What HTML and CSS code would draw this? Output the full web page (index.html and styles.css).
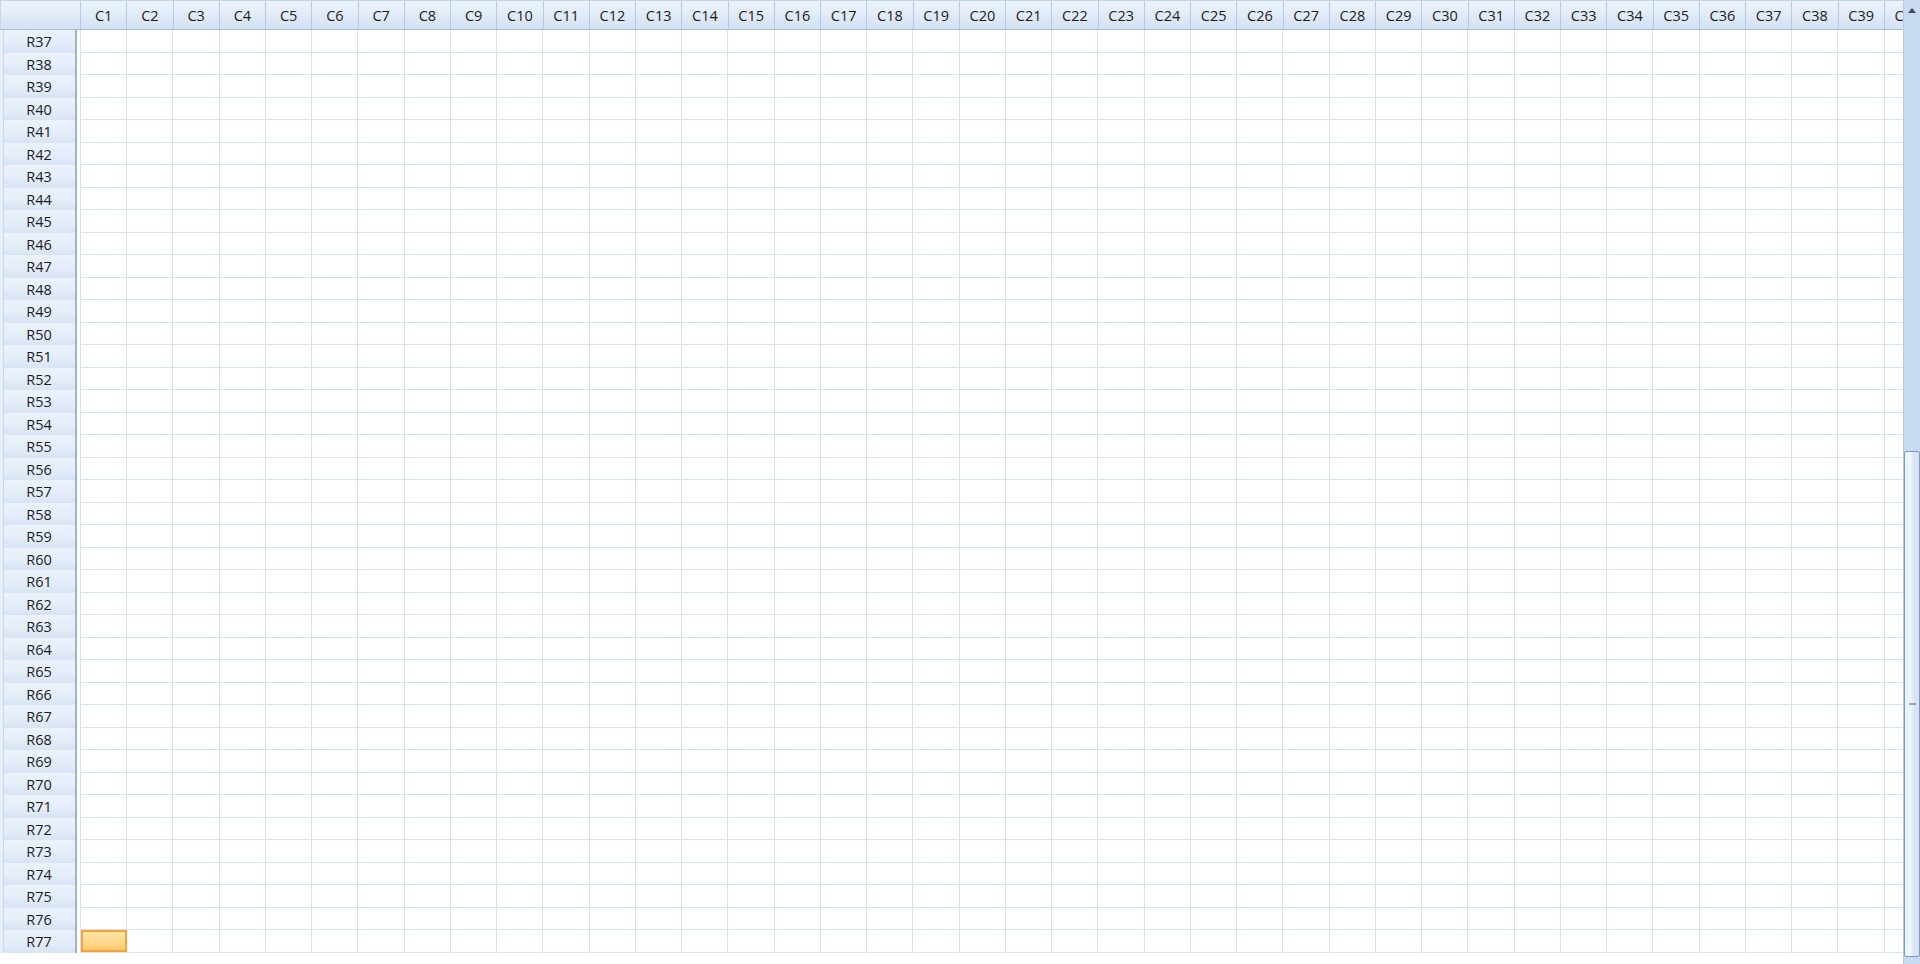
FILE: index.html
```html
<!DOCTYPE html>
<html>
<head>
<meta charset="utf-8">
<link rel="stylesheet" href="styles.css">
</head>
<body>
<div class="app">
  <div class="sheet">
    <div class="hdr">
      <div class="corner"></div>
      <div class="ch">C1</div><div class="ch">C2</div><div class="ch">C3</div><div class="ch">C4</div><div class="ch">C5</div><div class="ch">C6</div><div class="ch">C7</div><div class="ch">C8</div><div class="ch">C9</div><div class="ch">C10</div><div class="ch">C11</div><div class="ch">C12</div><div class="ch">C13</div><div class="ch">C14</div><div class="ch">C15</div><div class="ch">C16</div><div class="ch">C17</div><div class="ch">C18</div><div class="ch">C19</div><div class="ch">C20</div><div class="ch">C21</div><div class="ch">C22</div><div class="ch">C23</div><div class="ch">C24</div><div class="ch">C25</div><div class="ch">C26</div><div class="ch">C27</div><div class="ch">C28</div><div class="ch">C29</div><div class="ch">C30</div><div class="ch">C31</div><div class="ch">C32</div><div class="ch">C33</div><div class="ch">C34</div><div class="ch">C35</div><div class="ch">C36</div><div class="ch">C37</div><div class="ch">C38</div><div class="ch">C39</div><div class="ch">C40</div>
    </div>
    <div class="row"><div class="rh">R37</div><div class="cells"></div></div>
    <div class="row"><div class="rh">R38</div><div class="cells"></div></div>
    <div class="row"><div class="rh">R39</div><div class="cells"></div></div>
    <div class="row"><div class="rh">R40</div><div class="cells"></div></div>
    <div class="row"><div class="rh">R41</div><div class="cells"></div></div>
    <div class="row"><div class="rh">R42</div><div class="cells"></div></div>
    <div class="row"><div class="rh">R43</div><div class="cells"></div></div>
    <div class="row"><div class="rh">R44</div><div class="cells"></div></div>
    <div class="row"><div class="rh">R45</div><div class="cells"></div></div>
    <div class="row"><div class="rh">R46</div><div class="cells"></div></div>
    <div class="row"><div class="rh">R47</div><div class="cells"></div></div>
    <div class="row"><div class="rh">R48</div><div class="cells"></div></div>
    <div class="row"><div class="rh">R49</div><div class="cells"></div></div>
    <div class="row"><div class="rh">R50</div><div class="cells"></div></div>
    <div class="row"><div class="rh">R51</div><div class="cells"></div></div>
    <div class="row"><div class="rh">R52</div><div class="cells"></div></div>
    <div class="row"><div class="rh">R53</div><div class="cells"></div></div>
    <div class="row"><div class="rh">R54</div><div class="cells"></div></div>
    <div class="row"><div class="rh">R55</div><div class="cells"></div></div>
    <div class="row"><div class="rh">R56</div><div class="cells"></div></div>
    <div class="row"><div class="rh">R57</div><div class="cells"></div></div>
    <div class="row"><div class="rh">R58</div><div class="cells"></div></div>
    <div class="row"><div class="rh">R59</div><div class="cells"></div></div>
    <div class="row"><div class="rh">R60</div><div class="cells"></div></div>
    <div class="row"><div class="rh">R61</div><div class="cells"></div></div>
    <div class="row"><div class="rh">R62</div><div class="cells"></div></div>
    <div class="row"><div class="rh">R63</div><div class="cells"></div></div>
    <div class="row"><div class="rh">R64</div><div class="cells"></div></div>
    <div class="row"><div class="rh">R65</div><div class="cells"></div></div>
    <div class="row"><div class="rh">R66</div><div class="cells"></div></div>
    <div class="row"><div class="rh">R67</div><div class="cells"></div></div>
    <div class="row"><div class="rh">R68</div><div class="cells"></div></div>
    <div class="row"><div class="rh">R69</div><div class="cells"></div></div>
    <div class="row"><div class="rh">R70</div><div class="cells"></div></div>
    <div class="row"><div class="rh">R71</div><div class="cells"></div></div>
    <div class="row"><div class="rh">R72</div><div class="cells"></div></div>
    <div class="row"><div class="rh">R73</div><div class="cells"></div></div>
    <div class="row"><div class="rh">R74</div><div class="cells"></div></div>
    <div class="row"><div class="rh">R75</div><div class="cells"></div></div>
    <div class="row"><div class="rh">R76</div><div class="cells"></div></div>
    <div class="row"><div class="rh">R77</div><div class="cells"><div class="sel"></div></div></div>
  </div>
  <div class="vscroll">
    <div class="up"><svg width="8" height="5" viewBox="0 0 8 5"><path d="M0 5 L4 0 L8 5 Z" fill="#3c4a5e"/></svg></div>
    <div class="track-top"></div>
    <div class="thumb"><div class="grip"></div></div>
  </div>
</div>
</body>
</html>
```

FILE: styles.css
```css
html, body {
  margin: 0;
  padding: 0;
  background: #ffffff;
}
body {
  width: 1920px;
  height: 964px;
  overflow: hidden;
  font-family: "Open Sans", "Noto Sans", sans-serif;
  font-size: 14.5px;
  color: #1c1c1c;
}
.app {
  display: flex;
  width: 1920px;
  height: 964px;
}
.sheet {
  width: 1903px;
  flex: none;
  overflow: hidden;
  display: flex;
  flex-direction: column;
}
.hdr {
  display: flex;
  height: 30px;
  flex: none;
  box-sizing: border-box;
  border-top: 1px solid #c4d4e8;
  border-bottom: 1px solid #a7bdd8;
  background: linear-gradient(#ecf3fc 0%, #e2ecf8 45%, #d3e1f2 100%);
}
.corner {
  width: 80px;
  flex: none;
  box-sizing: border-box;
  border-left: 1px solid #c6d5e8;
}
.ch {
  width: 46.25px;
  flex: none;
  box-sizing: border-box;
  border-left: 1px solid #b7cae2;
  text-align: center;
  line-height: 28px;
  padding-top: 1px;
  white-space: nowrap;
  overflow: hidden;
}
.row {
  display: flex;
  height: 22.5px;
  flex: none;
}
.rh {
  width: 80px;
  flex: none;
  box-sizing: border-box;
  border-left: 3px solid #e6eef9;
  border-right: 3px solid #ffffff;
  box-shadow: inset -2px 0 0 #9db3d0, inset 1px 0 0 #cbd9ec;
  background: linear-gradient(#ebf2fb 0%, #e4edf9 55%, #d8e4f4 100%);
  text-align: center;
  line-height: 22.5px;
  padding-top: 1px;
  padding-right: 2px;
}
.cells {
  flex: 1;
  box-sizing: border-box;
  border-bottom: 1px solid #d4e2f4;
  background: repeating-linear-gradient(to right, #d4e2f4 0, #d4e2f4 1px, transparent 1px, transparent 46.25px);
  display: flex;
}
.sel {
  width: 46.25px;
  margin-left: 1px;
  box-sizing: border-box;
  border: 2px solid #f7a03c;
  background: linear-gradient(#ffe6a6 0%, #ffd68b 60%, #ffc96b 100%);
}
.vscroll {
  width: 17px;
  flex: none;
  box-sizing: border-box;
  background: #c9dbf1;
  border-left: 1px solid #b6cbe6;
  display: flex;
  flex-direction: column;
}
.up {
  height: 22px;
  flex: none;
  display: flex;
  justify-content: center;
  padding-top: 8px;
  box-sizing: border-box;
}
.up svg {
  display: block;
}
.track-top {
  height: 429px;
  flex: none;
}
.thumb {
  height: 506px;
  flex: none;
  box-sizing: border-box;
  border: 1px solid #7f9cc3;
  border-radius: 2px;
  background: linear-gradient(to right, #e8f1fc 0%, #eef5fd 40%, #dbe7f7 60%, #d3e2f5 100%);
  display: flex;
  align-items: center;
  justify-content: center;
}
.grip {
  width: 7px;
  height: 2px;
  background: #8ea5c6;
}
```
